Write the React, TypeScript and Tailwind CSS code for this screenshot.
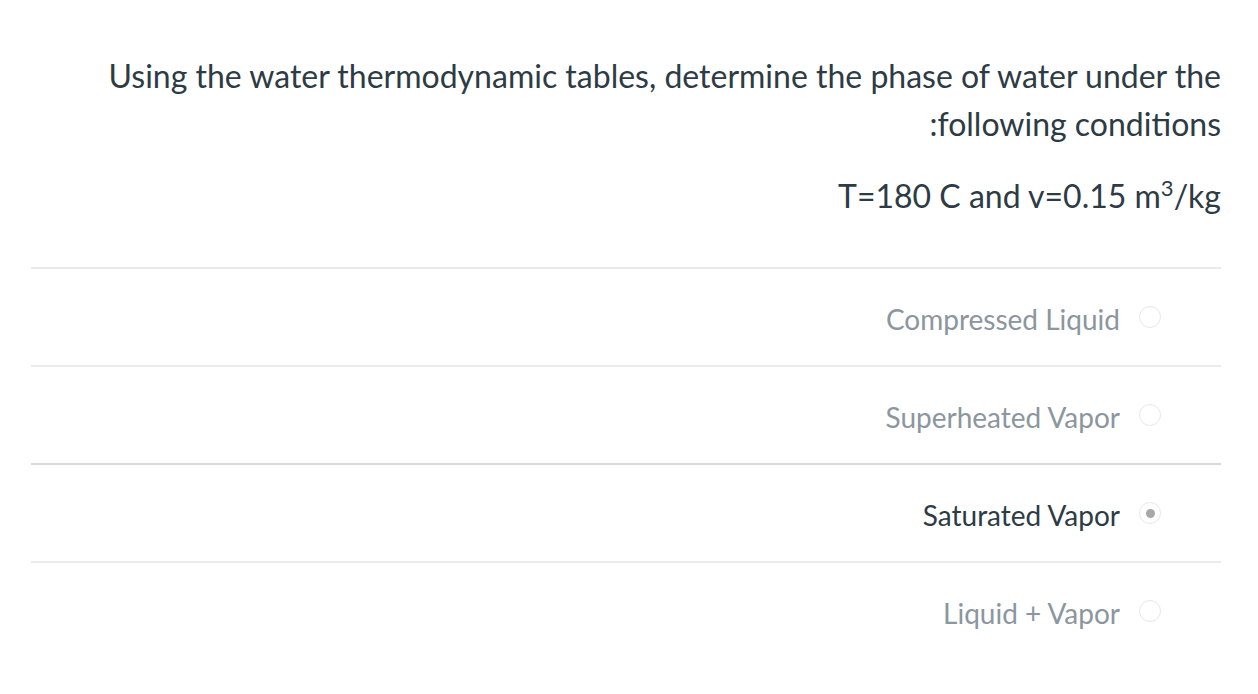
import React from "react"

const answers = [
  { label: "Compressed Liquid", checked: false },
  { label: "Superheated Vapor", checked: false },
  { label: "Saturated Vapor", checked: true },
  { label: "Liquid + Vapor", checked: false },
]

function Radio({ checked }: { checked: boolean }) {
  return (
    <span className="flex h-[22px] w-[22px] shrink-0 items-center justify-center rounded-full border border-[#e8e8e8] bg-white">
      {checked && <span className="h-[9px] w-[9px] rounded-full bg-[#a8a8a8]" />}
    </span>
  )
}

export default function App() {
  return (
    <div className="min-h-[694px] bg-white font-['Lato','Noto_Sans',sans-serif] text-[#2d3b45]">
      <div className="ml-[31px] mr-[37px] pt-[52px]" dir="rtl">
        <p className="text-[32px] leading-[48px]">
          Using the water thermodynamic tables, determine the phase of water under the following conditions:
        </p>
        <p className="mt-[24px] text-right text-[32px] leading-[48px]" dir="ltr">
          T=180 C and v=0.15 m<sup className="top-[-12px] text-[22px]">3</sup>/kg
        </p>
        <div className="mt-[47px]">
          {answers.map((a, i) => (
            <div
              key={a.label}
              className={
                "flex h-[98px] items-center border-t-2 " +
                (i === 2 ? "border-[#d9d9d9]" : "border-[#ebebeb]")
              }
            >
              <div className="flex w-full items-center justify-start gap-[19px] pr-[60px]" dir="rtl">
                <Radio checked={a.checked} />
                <span
                  dir="ltr"
                  className={
                    "pt-[3px] text-[28px] " + (a.checked ? "text-[#2d3b45]" : "text-[#8b969e]")
                  }
                >
                  {a.label}
                </span>
              </div>
            </div>
          ))}
        </div>
      </div>
    </div>
  )
}
